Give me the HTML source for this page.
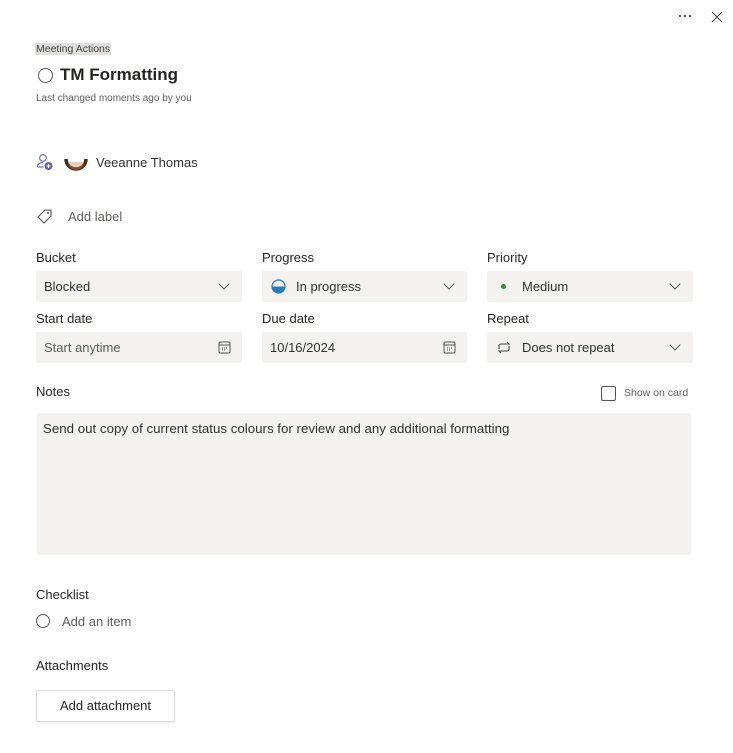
<!DOCTYPE html>
<html><head><style>
body{margin:0;width:733px;height:753px;background:#fff;font-family:"Liberation Sans",sans-serif;color:#252423;position:relative;overflow:hidden}
.a{position:absolute}
.lbl{font-size:13px;color:#252423}
.box{position:absolute;background:#f3f2f1;border-radius:2px;height:31px;font-size:13px;color:#323130;line-height:31px}
.chev{position:absolute;right:14px;top:9px;width:7px;height:7px;border-right:1px solid #555;border-bottom:1px solid #555;transform:rotate(45deg)}
</style></head><body>
<svg class="a" style="left:678px;top:14px" width="16" height="4"><circle cx="2" cy="2" r="1.1" fill="#444"/><circle cx="7" cy="2" r="1.1" fill="#444"/><circle cx="12" cy="2" r="1.1" fill="#444"/></svg>
<svg class="a" style="left:711px;top:11px" width="12" height="12"><path d="M1 1l10 10M11 1L1 11" stroke="#444" stroke-width="1.1"/></svg>
<div class="a" style="left:35px;top:43px;font-size:10.5px;background:#e1dfdd;padding:0 1px;color:#444">Meeting Actions</div>
<div class="a" style="left:38px;top:68px;width:13px;height:13px;border:1.3px solid #555;border-radius:50%"></div>
<div class="a" style="left:60px;top:65px;font-size:17px;font-weight:bold;color:#252423">TM Formatting</div>
<div class="a" style="left:36px;top:93px;font-size:10px;color:#605e5c">Last changed moments ago by you</div>
<svg class="a" style="left:36px;top:153px" width="18" height="18" viewBox="0 0 18 18"><circle cx="7" cy="5" r="3.3" fill="none" stroke="#6264a7" stroke-width="1.1"/><path d="M1.5 14c0-3 2.5-4.5 5.5-4.5" fill="none" stroke="#6264a7" stroke-width="1.1"/><path d="M1.5 14h6" stroke="#6264a7" stroke-width="1.1"/><circle cx="12.5" cy="13" r="4" fill="#6264a7"/><path d="M12.5 11v4M10.5 13h4" stroke="#fff" stroke-width="1.1"/></svg>
<svg class="a" style="left:64px;top:151px" width="24" height="24" viewBox="0 0 24 24"><path d="M2 8a10 10 0 0 0 20 0" fill="none" stroke="#4a2a15" stroke-width="3.5"/><path d="M4 11a8 8 0 0 0 16 0" fill="#c9885a" opacity=".4"/></svg>
<div class="a" style="left:96px;top:155px;font-size:13px;color:#323130">Veeanne Thomas</div>
<svg class="a" style="left:36px;top:208px" width="18" height="18" viewBox="0 0 18 18"><path d="M9 2h6v6l-7 7-6-6z" fill="none" stroke="#555" stroke-width="1.1"/><circle cx="12" cy="5" r="1" fill="#555"/></svg>
<div class="a" style="left:68px;top:209px;font-size:13px;color:#605e5c">Add label</div>

<div class="a lbl" style="left:36px;top:250px">Bucket</div>
<div class="a lbl" style="left:262px;top:250px">Progress</div>
<div class="a lbl" style="left:487px;top:250px">Priority</div>
<div class="box" style="left:36px;top:271px;width:206px"><span style="margin-left:8px">Blocked</span><div class="chev"></div></div>
<div class="box" style="left:262px;top:271px;width:205px"><svg class="a" style="left:9px;top:8px" width="15" height="15" viewBox="0 0 15 15"><circle cx="7.5" cy="7.5" r="6.5" fill="none" stroke="#2e78b7" stroke-width="1.2"/><path d="M1 7.5h13a6.5 6.5 0 0 1-13 0z" fill="#2e78b7"/></svg><span style="margin-left:34px">In progress</span><div class="chev"></div></div>
<div class="box" style="left:487px;top:271px;width:206px"><div class="a" style="left:14px;top:13px;width:5px;height:5px;border-radius:50%;background:#3a8a3a"></div><span style="margin-left:35px">Medium</span><div class="chev"></div></div>

<div class="a lbl" style="left:36px;top:311px">Start date</div>
<div class="a lbl" style="left:262px;top:311px">Due date</div>
<div class="a lbl" style="left:487px;top:311px">Repeat</div>
<div class="box" style="left:36px;top:332px;width:206px;color:#605e5c"><span style="margin-left:8px">Start anytime</span><svg class="a" style="right:11px;top:9px" width="13" height="13" viewBox="0 0 13 13"><rect x="1" y="1" width="11" height="11" rx="1.5" fill="none" stroke="#555"/><path d="M1 4h11" stroke="#555"/><path d="M4 7h1M6 7h1M8 7h1M4 9h1M6 9h1" stroke="#555"/></svg></div>
<div class="box" style="left:262px;top:332px;width:205px"><span style="margin-left:8px">10/16/2024</span><svg class="a" style="right:11px;top:9px" width="13" height="13" viewBox="0 0 13 13"><rect x="1" y="1" width="11" height="11" rx="1.5" fill="none" stroke="#555"/><path d="M1 4h11" stroke="#555"/><path d="M4 7h1M6 7h1M8 7h1M4 9h1M6 9h1" stroke="#555"/></svg></div>
<div class="box" style="left:487px;top:332px;width:206px"><svg class="a" style="left:9px;top:8px" width="16" height="15" viewBox="0 0 16 15"><path d="M3 9V6a2 2 0 0 1 2-2h8l-2-2M13 6v3a2 2 0 0 1-2 2H3l2 2" fill="none" stroke="#444" stroke-width="1.1"/></svg><span style="margin-left:35px">Does not repeat</span><div class="chev"></div></div>

<div class="a lbl" style="left:36px;top:384px">Notes</div>
<div class="a" style="left:601px;top:386px;width:13px;height:13px;border:1px solid #555;border-radius:2px"></div>
<div class="a" style="left:624px;top:387px;font-size:10.5px;color:#605e5c">Show on card</div>
<div class="a" style="left:37px;top:413px;width:654px;height:142px;background:#f3f2f1;border-radius:2px"></div>
<div class="a" style="left:43px;top:421px;font-size:13.3px;color:#323130">Send out copy of current status colours for review and any additional formatting</div>

<div class="a lbl" style="left:36px;top:587px">Checklist</div>
<div class="a" style="left:36px;top:614px;width:12px;height:12px;border:1.2px solid #555;border-radius:50%"></div>
<div class="a" style="left:62px;top:614px;font-size:13px;color:#605e5c">Add an item</div>
<div class="a lbl" style="left:36px;top:658px">Attachments</div>
<div class="a" style="left:36px;top:690px;width:137px;height:30px;border:1px solid #e1dfdd;border-radius:2px;box-shadow:0 1px 2px rgba(0,0,0,.1);font-size:13px;line-height:30px;text-align:center;color:#252423">Add attachment</div>
</body></html>
